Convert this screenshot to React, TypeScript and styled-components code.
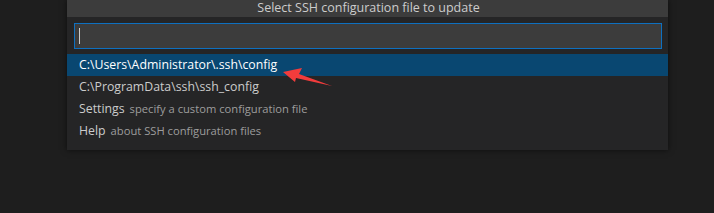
import React from "react";
import styled, { createGlobalStyle } from "styled-components";

const GlobalStyle = createGlobalStyle`
  html, body {
    margin: 0;
    padding: 0;
    background: #1e1e1e;
    height: 100%;
  }
  body {
    font-family: "Open Sans", "Noto Sans", sans-serif;
  }
`;

const Page = styled.div`
  width: 714px;
  height: 213px;
  padding-left: 67px;
  box-sizing: border-box;
  background: #1e1e1e;
  overflow: hidden;
`;

const Panel = styled.div`
  position: relative;
  width: 601px;
  background: #252526;
  box-shadow: 0 0 6px rgba(0, 0, 0, 0.6);
  padding-bottom: 8px;
`;

const TitleBar = styled.div`
  height: 17px;
  background: #3c3c3c;
  color: #cccccc;
  font-size: 12.5px;
  line-height: 15px;
  text-align: center;
  padding-left: 2px;
`;

const InputBox = styled.div`
  margin: 6px 6px 5px 7px;
  height: 26px;
  box-sizing: border-box;
  border: 1px solid #0e70c0;
  background: #3c3c3c;
  display: flex;
  align-items: center;
  padding-left: 4px;
`;

const Caret = styled.span`
  width: 1px;
  height: 16px;
  background: #cccccc;
`;

const List = styled.div`
  display: flex;
  flex-direction: column;
`;

const Row = styled.div<{ $selected?: boolean }>`
  height: 22px;
  line-height: 22px;
  padding-left: 12px;
  background: ${({ $selected }) => ($selected ? "#094771" : "transparent")};
  color: ${({ $selected }) => ($selected ? "#ffffff" : "#cccccc")};
  font-size: 12.3px;
  white-space: nowrap;
  display: flex;
  align-items: baseline;
  gap: 5px;
`;

const Label = styled.span``;

const Description = styled.span`
  color: #9d9d9d;
  font-size: 11.2px;
`;

const Arrow = styled.svg`
  position: absolute;
  left: 216px;
  top: 66px;
`;

const items = [
  { label: "C:\\Users\\Administrator\\.ssh\\config", selected: true },
  { label: "C:\\ProgramData\\ssh\\ssh_config" },
  { label: "Settings", description: "specify a custom configuration file" },
  { label: "Help", description: "about SSH configuration files" },
];

const App = () => {
  return (
    <>
      <GlobalStyle />
      <Page>
        <Panel>
          <TitleBar>Select SSH configuration file to update</TitleBar>
          <InputBox>
            <Caret />
          </InputBox>
          <List>
            {items.map((item) => (
              <Row key={item.label} $selected={item.selected}>
                <Label>{item.label}</Label>
                {item.description && <Description>{item.description}</Description>}
              </Row>
            ))}
          </List>
          <Arrow width="52" height="24" viewBox="0 0 52 24">
            <polygon
              points="0,6 19,2 16,8 49,20 13,12 12,16"
              fill="#f23c3c"
            />
          </Arrow>
        </Panel>
      </Page>
    </>
  );
};

export default App;
